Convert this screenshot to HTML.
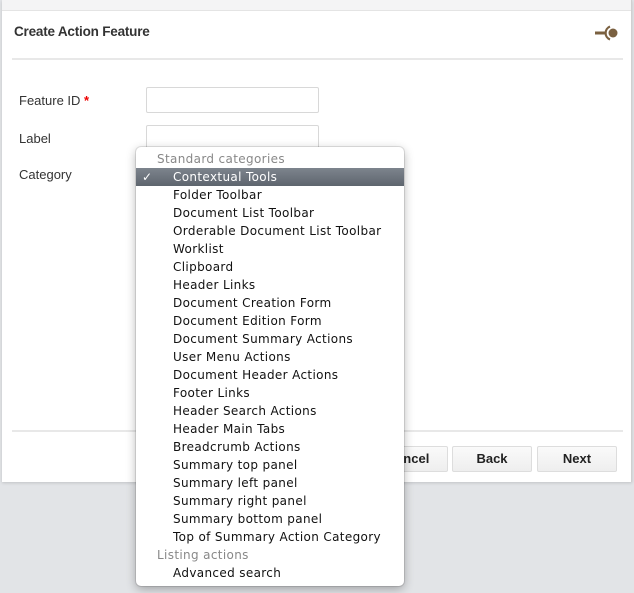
<!DOCTYPE html>
<html><head><style>
body{margin:0;width:634px;height:593px;background:#e2e4e7;position:relative;overflow:hidden;font-family:"Liberation Sans",sans-serif}
.dlg{position:absolute;left:2px;top:0;width:629px;height:482px;background:#fff;border-right:1px solid #d0d0d0;box-shadow:0 1px 3px rgba(0,0,0,.15)}
.top{position:absolute;left:0;top:0;width:100%;height:10px;background:#f4f4f5;border-bottom:1px solid #e4e4e4}
.title{position:absolute;left:12px;top:24px;font-size:13.5px;font-weight:bold;color:#333;letter-spacing:-0.2px}
.hr{position:absolute;left:10px;width:611px;height:2px;background:#e8e8e8}
.lbl{position:absolute;left:17px;font-size:13px;color:#333}
.inp{position:absolute;left:144px;width:171px;height:24px;border:1px solid #d8d8d8;border-radius:2px}
.btn{position:absolute;top:446px;height:24px;width:78px;border:1px solid #ddd;border-radius:2px;background:linear-gradient(#fafafa,#eee);font-size:13px;font-weight:bold;text-align:center;line-height:24px;color:#222}
.dd{position:absolute;left:136px;top:147px;width:268px;height:439px;background:#fff;border-radius:5px;box-shadow:0 3px 10px rgba(0,0,0,.3),0 0 0 1px rgba(0,0,0,.1);font-family:"DejaVu Sans",sans-serif;font-size:12px;letter-spacing:0.35px}
.it{position:absolute;left:0;width:268px;height:18px;line-height:19px;padding-left:37px;box-sizing:border-box;color:#111}
.g{padding-left:21px;color:#888}
.sel{background:linear-gradient(#7d848d,#5e656e);color:#fff}
</style></head><body>
<div class="dlg">
<div class="top"></div>
<div class="title">Create Action Feature</div>
<svg style="position:absolute;left:592px;top:24px" width="26" height="18" viewBox="0 0 26 18"><path d="M1 9H12" stroke="#7a6040" stroke-width="3"/><path d="M16 2.5A7 7 0 0 0 16 15.5" fill="none" stroke="#7a6040" stroke-width="2.2"/><circle cx="19" cy="9" r="4.5" fill="#7a6040"/></svg>
<div class="hr" style="top:58px"></div>
<div class="lbl" style="top:93px">Feature ID <span style="color:#e00;font-weight:bold">*</span></div>
<div class="inp" style="top:87px"></div>
<div class="lbl" style="top:131px">Label</div>
<div class="inp" style="top:125px"></div>
<div class="lbl" style="top:167px">Category</div>
<div class="hr" style="top:430px"></div>
<div class="btn" style="left:366px">Cancel</div>
<div class="btn" style="left:450px">Back</div>
<div class="btn" style="left:535px">Next</div>
</div>
<div class="dd">
<div class="it g" style="top:3px">Standard categories</div>
<div class="it sel" style="top:21px"><span style="position:absolute;left:6px;font-weight:bold">✓</span>Contextual Tools</div>
<div class="it" style="top:39px">Folder Toolbar</div>
<div class="it" style="top:57px">Document List Toolbar</div>
<div class="it" style="top:75px">Orderable Document List Toolbar</div>
<div class="it" style="top:93px">Worklist</div>
<div class="it" style="top:111px">Clipboard</div>
<div class="it" style="top:129px">Header Links</div>
<div class="it" style="top:147px">Document Creation Form</div>
<div class="it" style="top:165px">Document Edition Form</div>
<div class="it" style="top:183px">Document Summary Actions</div>
<div class="it" style="top:201px">User Menu Actions</div>
<div class="it" style="top:219px">Document Header Actions</div>
<div class="it" style="top:237px">Footer Links</div>
<div class="it" style="top:255px">Header Search Actions</div>
<div class="it" style="top:273px">Header Main Tabs</div>
<div class="it" style="top:291px">Breadcrumb Actions</div>
<div class="it" style="top:309px">Summary top panel</div>
<div class="it" style="top:327px">Summary left panel</div>
<div class="it" style="top:345px">Summary right panel</div>
<div class="it" style="top:363px">Summary bottom panel</div>
<div class="it" style="top:381px">Top of Summary Action Category</div>
<div class="it g" style="top:399px">Listing actions</div>
<div class="it" style="top:417px">Advanced search</div>
</div>
</body></html>
